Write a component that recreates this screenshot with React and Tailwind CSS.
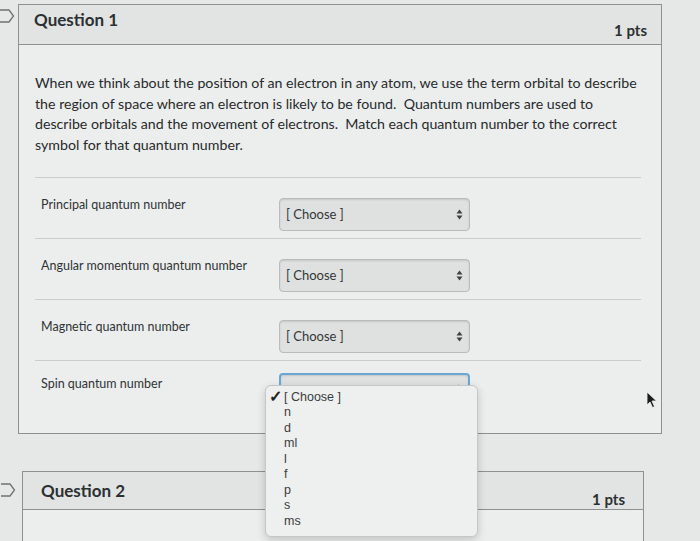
import React from "react";

function Flag({ className }) {
  return (
    <svg className={className} width="16" height="16" viewBox="0 0 16 16" fill="none">
      <path d="M-4 2 H9 L13.5 8 L9 14 H-4" stroke="#6f7271" strokeWidth="1.3" />
    </svg>
  );
}

function Arrows() {
  return (
    <svg width="7" height="11" viewBox="0 0 7 11">
      <path d="M3.5 0.5 L6.5 4.5 H0.5 Z" fill="#3d4142" />
      <path d="M3.5 10.5 L6.5 6.5 H0.5 Z" fill="#3d4142" />
    </svg>
  );
}

function Select({ focused }) {
  return (
    <div
      className={
        "w-[191px] h-[33px] rounded-[4px] flex items-center justify-between pl-[6px] pr-[6px] bg-[#dfe1e0] shadow-[inset_0_1px_2px_rgba(0,0,0,0.12)] " +
        (focused ? "border-2 border-[#6aa6d6]" : "border border-[#b9bcbb]")
      }
    >
      <span className={"text-[13px] text-[#343738] " + (focused ? "invisible" : "")}>[ Choose ]</span>
      <Arrows />
    </div>
  );
}

function Row({ label, last }) {
  return (
    <div className={"border-t border-[#cbcdcc] flex items-start pl-[6px] " + (last ? "h-[73px] pt-[12px]" : "h-[61px] pt-[19px]")}>
      <div className={"w-[238px] text-[12.5px] leading-[16px] text-[#2f3335] " + (last ? "pt-[3px]" : "")}>{label}</div>
      <div className={last ? "" : "mt-[1px]"}>
        <Select focused={last} />
      </div>
    </div>
  );
}

export default function App() {
  const options = ["n", "d", "ml", "l", "f", "p", "s", "ms"];
  return (
    <div className="relative w-[700px] h-[541px] overflow-hidden bg-[#e5e8e7] font-['Lato',sans-serif] text-[#2c3032]">
      <Flag className="absolute left-0 top-[8px]" />
      <Flag className="absolute left-[1px] top-[482px]" />

      <div className="pl-[18px] pt-[4px]">
        {/* Question 1 */}
        <div className="w-[644px] border border-[#8e9190] bg-[#eceeed]">
          <div className="h-[40px] bg-[#e2e4e3] border-b border-[#8e9190] flex justify-between pl-[15px] pr-[14px]">
            <div className="text-[17px] font-bold leading-[22px] pt-[4px]">Question 1</div>
            <div className="text-[15px] font-bold leading-[18px] self-end pb-[5px]">1 pts</div>
          </div>
          <div className="pl-[16px] pr-[20px] pt-[28px]">
            <p className="text-[14.2px] leading-[20.5px] text-[#262a2c] pb-[22px] whitespace-nowrap">
              When we think about the position of an electron in any atom, we use the term orbital to describe
              <br />
              the region of space where an electron is likely to be found.&nbsp; Quantum numbers are used to
              <br />
              describe orbitals and the movement of electrons.&nbsp; Match each quantum number to the correct
              <br />
              symbol for that quantum number.
            </p>
            <Row label="Principal quantum number" />
            <Row label="Angular momentum quantum number" />
            <Row label="Magnetic quantum number" />
            <Row label="Spin quantum number" last />
          </div>
        </div>

        {/* Question 2 */}
        <div className="mt-[37px] ml-[4px] w-[622px] h-[100px] border border-[#8e9190] bg-[#eceeed]">
          <div className="h-[38px] bg-[#e2e4e3] border-b border-[#8e9190] flex justify-between pl-[18px] pr-[18px]">
            <div className="text-[17px] font-bold leading-[22px] pt-[8px]">Question 2</div>
            <div className="text-[15px] font-bold leading-[18px] self-end pb-[1px]">1 pts</div>
          </div>
        </div>
      </div>

      {/* Open dropdown menu */}
      <div className="absolute left-[265px] top-[385px] w-[213px] h-[152px] rounded-[6px] bg-[#eef0ef] border border-[#c4c7c6] shadow-[0_3px_8px_rgba(0,0,0,0.18)] pt-[3px] font-['Liberation_Sans',Arial,sans-serif] text-[12.5px] text-[#3a3d3e]">
        <div className="flex items-center h-[16px]">
          <span className="w-[18px] text-center text-[16px] font-bold text-[#1f2223]">✓</span>
          <span>[ Choose ]</span>
        </div>
        {options.map((o) => (
          <div key={o} className="h-[15.5px] leading-[15.5px] pl-[18px]">{o}</div>
        ))}
      </div>

      {/* Mouse cursor */}
      <svg className="absolute left-[646px] top-[391px]" width="12" height="18" viewBox="0 0 12 18">
        <path d="M1 1 L1 14 L4 11 L6.5 16.5 L8.5 15.5 L6 10 L10.5 10 Z" fill="#1b1d1e" stroke="#f2f2f2" strokeWidth="0.8" />
      </svg>
    </div>
  );
}
